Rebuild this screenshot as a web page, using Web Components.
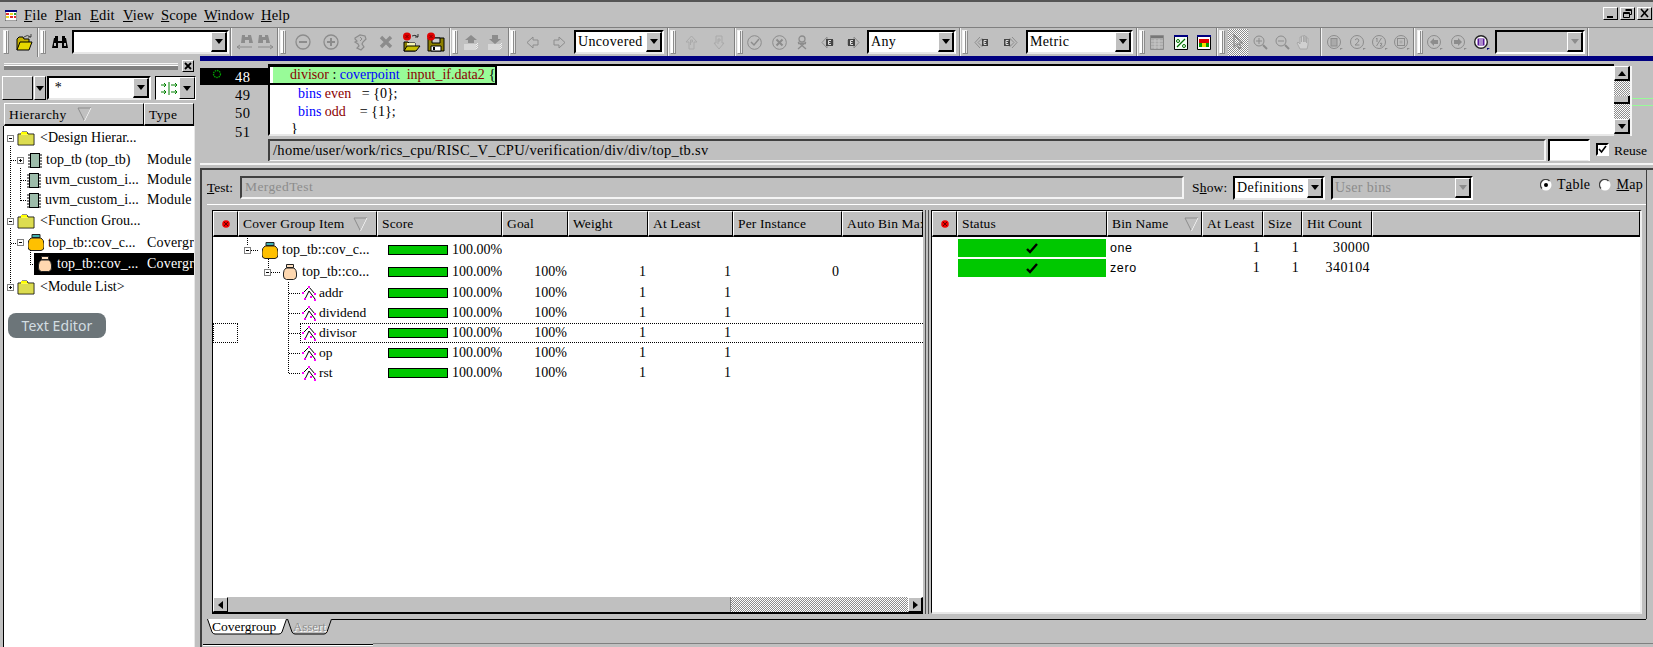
<!DOCTYPE html>
<html><head><meta charset="utf-8">
<style>
html,body{margin:0;padding:0;background:#c0c0c0}
body{width:1653px;height:647px;overflow:hidden;font:13.5px "Liberation Serif",serif;color:#000}
</style></head>
<body>
<q-app></q-app>
<script>
const G='#8c8c8c';
const ic={
open:[17,17,`<path d="M1 16V5l2-2h4l1 2h5v3" fill="#c8b400" stroke="#000"/><path d="M1 16h12l3-8H4z" fill="#e8d800" stroke="#000"/><path d="M8 3q3-3 7 0M15 3V0M15 3h-3" fill="none" stroke="#444"/>`],
binoc:[16,15,`<path d="M2 3h4v3h4V3h4l2 10h-6V8H6v5H0z" fill="#000"/><path d="M3 1h3v3H3zM10 1h3v3h-3z" fill="#000"/><path d="M2 8h2v3H2zM12 8h2v3h-2z" fill="#bbb"/>`],
binocL:[18,16,`<path d="M6 1h3v2h3V1h3l2 8h-4V6H9v3H5z" fill="${G}"/><path d="M1 13h15M1 13l3-2M1 13l3 2" fill="none" stroke="${G}"/>`],
binocR:[17,16,`<path d="M2 1h3v2h3V1h3l2 8H9V6H6v3H1z" fill="${G}"/><path d="M1 13h15M16 13l-3-2M16 13l-3 2" fill="none" stroke="${G}"/>`],
minus:[16,16,`<circle cx="8" cy="8" r="7" fill="none" stroke="${G}" stroke-width="1.300"/><path d="M4 8h8" stroke="${G}" stroke-width="2"/>`],
plus:[16,16,`<circle cx="8" cy="8" r="7" fill="none" stroke="${G}" stroke-width="1.300"/><path d="M4 8h8M8 4v8" stroke="${G}" stroke-width="2"/>`],
hand2:[16,17,`<path d="M3 4l5-3 5 1 1 3-3 3-1 2 2 3-3 3-4-2 2-2-1-2-3-2 2-1-2-2z" fill="#bdbdbd" stroke="${G}" stroke-width="1.200"/><path d="M8 3l2 2-2 2" fill="none" stroke="${G}"/>`],
xx:[14,14,`<path d="M2 2l10 10M12 2L2 12" stroke="${G}" stroke-width="3.400"/>`],
redfolder:[19,20,`<path d="M2 19V10h4l1 1h6v8z" fill="#8c8000" stroke="#000"/><path d="M5 11h8v4H5z" fill="#f4f4b0"/><path d="M2 19l3-5h13l-4 5z" fill="#c8c000" stroke="#000"/><circle cx="5" cy="4.500" r="4" fill="#e00000"/><path d="M3.500 3l3 3M6.500 3l-3 3" stroke="#800000"/><path d="M10 4q3-2 6 1M16 5V2M16 5h-3" fill="none" stroke="#333"/>`],
reddisk:[19,20,`<path d="M2 6h16v13H2z" fill="#8c8000" stroke="#000"/><path d="M6 6h8v5H6z" fill="#ccc" stroke="#000"/><path d="M5 14h10v5H5z" fill="#fff" stroke="#000"/><path d="M7 15h2v3H7z" fill="#000"/><circle cx="5" cy="4.500" r="4" fill="#e00000"/><path d="M3.500 3l3 3M6.500 3l-3 3" stroke="#800000"/>`],
stackup:[16,17,`<path d="M8 1l6 5h-3v3H5V6H2z" fill="${G}"/><path d="M1 11h12l2-2M1 13h12l2-2M1 15h12l2-2" fill="none" stroke="#f0f0f0"/>`],
stackdn:[16,17,`<path d="M8 10l6-5h-3V1H5v4H2z" fill="${G}"/><path d="M1 11h12l2-2M1 13h12l2-2M1 15h12l2-2" fill="none" stroke="#f0f0f0"/>`],
arrL:[13,13,`<path d="M1 6.500L7 1v3h5v5H7v3z" fill="none" stroke="${G}"/>`],
arrR:[13,13,`<path d="M12 6.500L6 1v3H1v5h5v3z" fill="none" stroke="${G}"/>`],
Pup:[13,15,`<path d="M6.500 1L12 7H9v7H4V7H1z" fill="none" stroke="#aaa"/><path d="M5.500 5v5M5.500 5h2v2h-2" fill="none" stroke="#aaa"/>`],
Pdn:[14,15,`<path d="M7 14l5-6H10V1H4v7H2z" fill="none" stroke="#aaa"/><path d="M6 4v5M6 4h2v2H6" fill="none" stroke="#aaa"/>`],
chk:[15,15,`<circle cx="7.500" cy="7.500" r="6.800" fill="none" stroke="${G}"/><path d="M4 7l3 3 5-6" fill="none" stroke="${G}" stroke-width="1.500"/>`],
xc:[15,15,`<circle cx="7.500" cy="7.500" r="6.800" fill="none" stroke="${G}"/><path d="M4.500 4.500l6 6M10.500 4.500l-6 6" stroke="${G}" stroke-width="2"/>`],
person:[12,15,`<circle cx="6" cy="4" r="3" fill="none" stroke="${G}" stroke-width="1.300"/><path d="M2 14L10 7M10 14L2 7M2 8.500h8" stroke="${G}" stroke-width="1.300"/>`],
Eleft:[13,13,`<path d="M1 6.500L6 1v3h6v5H6v3z" fill="none" stroke="${G}"/><rect x="5" y="3" width="7" height="7" fill="#444"/><path d="M10 4.500H7.500v4H10M7.500 6.500h2" fill="none" stroke="#ddd"/>`],
Eright:[13,13,`<path d="M12 6.500L7 1v3H1v5h6v3z" fill="none" stroke="${G}"/><rect x="1" y="3" width="7" height="7" fill="#444"/><path d="M6 4.500H3.500v4H6M3.500 6.500h2" fill="none" stroke="#ddd"/>`],
dEl:[15,13,`<path d="M1 6.500L6 1M1 6.500L6 12M4 6.500L8 2.500v2h5v4H8v2z" fill="none" stroke="${G}"/><rect x="8" y="3" width="6" height="7" fill="#444"/><path d="M12.500 4.500H10v4h2.500M10 6.500h2" fill="none" stroke="#ddd"/>`],
dEr:[15,13,`<path d="M14 6.500L9 1M14 6.500L9 12M11 6.500L7 2.500v2H2v4h5v2z" fill="none" stroke="${G}"/><rect x="1" y="3" width="6" height="7" fill="#444"/><path d="M5.500 4.500H3v4h2.500M3 6.500h2" fill="none" stroke="#ddd"/>`],
tbl:[14,15,`<path d="M.5.5h13v14H.5z" fill="#aaa" stroke="${G}"/><path d="M1 2h12" stroke="#777" stroke-width="2"/><path d="M1 6h12M1 9h12M1 12h12M5 4v10M9 4v10" stroke="#c8c8c8"/>`],
pct:[14,15,`<path d="M.5.5h13v14H.5z" fill="#f4fff4" stroke="#000"/><path d="M0 1h14" stroke="#000080" stroke-width="2"/><path d="M3 12l8-8" stroke="#007000" stroke-width="1.300"/><circle cx="4" cy="6" r="1.500" fill="none" stroke="#007000"/><circle cx="10" cy="11" r="1.500" fill="none" stroke="#007000"/>`],
clr:[14,15,`<path d="M.5.5h13v14H.5z" fill="#fff" stroke="#000"/><path d="M0 1h14" stroke="#000080" stroke-width="2"/><path d="M2 4h10v8H2z" fill="#00a000"/><path d="M2 4h10v4H2z" fill="#e00000"/><path d="M5 8h4v4H5z" fill="#f0e000"/>`],
ptr:[10,17,`<path d="M1 1v12l3-3 2 5 2-1-2-5h4z" fill="none" stroke="${G}" stroke-width="1.200"/>`],
zp:[15,15,`<circle cx="6" cy="6" r="5" fill="none" stroke="${G}"/><path d="M3 6h6M6 3v6" stroke="${G}"/><path d="M10 10l4 4" stroke="${G}" stroke-width="2"/>`],
zm:[15,15,`<circle cx="6" cy="6" r="5" fill="none" stroke="${G}"/><path d="M3 6h6" stroke="${G}"/><path d="M10 10l4 4" stroke="${G}" stroke-width="2"/>`],
hnd:[16,17,`<path d="M4 15L1 9l1-1 2 2V3h1.500v5-6H7.500v6-6.500H9V8V2.500h1.500V9 4H12v7l-1 4z" fill="#d0d0d0" stroke="#a8a8a8"/>`],
z1:[16,15,`<circle cx="7" cy="7" r="6.500" fill="none" stroke="${G}"/><rect x="4" y="3.500" width="6" height="7.500" fill="#aaa" stroke="${G}"/><path d="M13 13h3l-3 2z" fill="${G}"/>`],
z2:[16,15,`<circle cx="7" cy="7" r="6.500" fill="none" stroke="${G}"/><path d="M5 5q2-3 4 0q0 2-4 5h4.500" fill="none" stroke="${G}"/><path d="M13 13h3l-3 2z" fill="${G}"/>`],
zh:[16,15,`<circle cx="7" cy="7" r="6.500" fill="none" stroke="${G}"/><path d="M4 4l1-1v4M9.500 3L4.500 11M8 8.500q2-1 2 .5l-2 2h2.500" fill="none" stroke="${G}"/><path d="M13 13h3l-3 2z" fill="${G}"/>`],
zr:[16,15,`<circle cx="7" cy="7" r="6.500" fill="none" stroke="${G}"/><rect x="3.500" y="3.500" width="7" height="7" fill="none" stroke="${G}"/><rect x="5.500" y="5.500" width="3" height="3" fill="#aaa"/><path d="M13 13h3l-3 2z" fill="${G}"/>`],
bk:[16,15,`<circle cx="7" cy="7" r="6.500" fill="none" stroke="${G}"/><path d="M3 7l4-4v2h4v4H7v2z" fill="${G}"/><path d="M13 13h3l-3 2z" fill="${G}"/>`],
fw:[16,15,`<circle cx="7" cy="7" r="6.500" fill="none" stroke="${G}"/><path d="M11 7L7 3v2H3v4h4v2z" fill="${G}"/><path d="M13 13h3l-3 2z" fill="${G}"/>`],
lst:[16,15,`<circle cx="7" cy="7" r="6.300" fill="#fff" stroke="#222" stroke-width="1.400"/><path d="M3.500 3.500h7v7h-7z" fill="#5a1a9a"/><path d="M5 5h4M5 7h4M5 9h4" stroke="#fff"/><path d="M13 13h3l-3 2z" fill="#000080"/>`],
folder:[18,15,`<path d="M1 3h3l1-2h5l1 2h6v11H1z" fill="#ffff40" stroke="#222"/><path d="M2 4h14v9H2z" fill="#dcdc50"/><path d="M4 1h6v2H4z" fill="#ff0"/>`],
chip:[14,15,`<path d="M0 2h3M0 5h3M0 8h3M0 11h3M0 14h3M11 2h3M11 5h3M11 8h3M11 11h3M11 14h3" stroke="#000"/><rect x="2.500" y=".5" width="9" height="14" fill="#9dbcaa" stroke="#000"/>`],
jar:[16,17,`<path d="M4 .5h8v3H4z" fill="#40b0b0" stroke="#222"/><path d="M3 4h10q3 2 3 6v3q0 3-3 3.500H3q-3-.5-3-3.500v-3q0-4 3-6z" fill="#ffc000" stroke="#222"/>`],
jar2:[14,16,`<path d="M3.500.5h7v3h-7z" fill="#ffe0c0" stroke="#222"/><path d="M3 4h8q2.500 2 2.500 5v3q0 3-3 3.500h-7q-3-.5-3-3.500V9q0-3 2.500-5z" fill="#ffd8b0" stroke="#222"/>`],
cp:[15,15,`<path d="M7 1L1 7M7 1L13 8M7 5L3 13M7 5L13 13" fill="none" stroke="#000"/><path d="M6 0h2v2H6zM0 6h2v2H0zM12 7h2v2h-2zM2 12h2v2H2zM12 13h2v2h-2zM8 10h2v2H8z" fill="#f0f"/>`],
sort:[15,15,`<path d="M1 1h13L7.500 14z" fill="none" stroke="#8c8c8c"/><path d="M7.500 14L14 1" stroke="#fff"/>`],
dot:[10,10,`<circle cx="5" cy="5" r="3.800" fill="#f00000"/><path d="M3 3l4 4M7 3L3 7" stroke="#600000"/>`],
tick:[13,11,`<path d="M1 6l3 3L11 1" fill="none" stroke="#000" stroke-width="2.400"/>`],
filter:[16,13,`<path d="M0 3h5M3 1l2 2-2 2M0 10h5M3 8l2 2-2 2M8 0v13M10 3h6M14 1l2 2-2 2M10 10h6M14 8l2 2-2 2" fill="none" stroke="#008000"/>`],
app:[12,11,`<rect width="12" height="11" fill="#fff" stroke="#444"/><path d="M0 1h12" stroke="#000080" stroke-width="2"/><path d="M1 3h3v2H1z" fill="#e03030"/><path d="M5 3h3v2H5z" fill="#e8d820"/><path d="M9 3h2v2H9z" fill="#30a030"/><path d="M1 6h3v2H1z" fill="#e8d820"/><path d="M5 6h3v2H5z" fill="#e03030"/><path d="M9 6h2v2H9z" fill="#e03030"/>`]
};
const svg=(n)=>{const i=ic[n];return `<svg width="${i[0]}" height="${i[1]}" viewBox="0 0 ${i[0]} ${i[1]}" style="display:block;flex:none">${i[2]}</svg>`};
const esc=s=>String(s).replace(/&/g,'&amp;').replace(/</g,'&lt;').replace(/>/g,'&gt;');
const D=(n,css,html)=>customElements.define(n,class extends HTMLElement{connectedCallback(){if(this.shadowRoot)return;const r=this.attachShadow({mode:'open'});r.innerHTML=`<style>${css}</style>`+(typeof html==='function'?html(this):html)}});
const DITH='repeating-conic-gradient(#8c8c8c 0 25%,#fff 0 50%) 0 0/2px 2px';

D('q-icon',':host{display:block;flex:none}',h=>svg(h.getAttribute('n')));
D('q-grip',':host{display:block;flex:none;width:6px;height:24px;box-sizing:border-box;border:1px solid #8c8c8c;border-left-color:#f0f0f0;border-top-color:#f0f0f0;background:linear-gradient(90deg,#fff 0 2px,#8c8c8c 2px 3px,#e8e8e8 3px)}','');
D('q-sep',':host{display:block;flex:none;width:2px;height:29px;background:linear-gradient(90deg,#808080 0 1px,#f4f4f4 1px)}','');
D('q-arrow',`:host{display:flex;flex:none;align-items:center;justify-content:center;box-sizing:border-box;background:#c0c0c0;border:1px solid;border-color:#fff #000 #000 #fff}
 i{display:block;width:0;height:0;border-style:solid;border-color:transparent}
 :host([d=down]) i{border-width:5px 4.500px 0;border-top-color:var(--a,#000)}
 :host([d=up]) i{border-width:0 4.500px 5px;border-bottom-color:var(--a,#000)}
 :host([d=left]) i{border-width:4.500px 5px 4.500px 0;border-right-color:var(--a,#000)}
 :host([d=right]) i{border-width:4.500px 0 4.500px 5px;border-left-color:var(--a,#000)}`,'<i></i>');
D('q-combo',`:host{display:flex;flex:none;box-sizing:border-box;height:24px;background:#fff;border:2px solid;border-color:#000 #fff #e8e8e8 #000;font-size:14px;align-items:stretch}
 :host([off]){background:#c0c0c0;color:#8c8c8c;border-color:#000 #fff #fff #000}
 .t{flex:1;overflow:hidden;white-space:nowrap;padding-left:2px;line-height:19px;letter-spacing:.35px}
 q-arrow{width:16px;height:20px;border-right:2px solid #000;border-bottom:2px solid #000}
 :host([off]) q-arrow{--a:#8c8c8c}`,'<span class="t"><slot></slot></span><q-arrow d="down"></q-arrow>');
D('q-menubar',`:host{display:flex;align-items:center;height:25px;box-sizing:border-box;padding:2px 0 0 5px;font-size:14.5px;letter-spacing:.15px}
 span{display:block;white-space:nowrap}
 .b{margin-left:auto;display:flex;gap:2px;margin-right:1px;margin-top:-5px}
 .w{width:15px;height:13px;box-sizing:border-box;border:1px solid;border-color:#fff #000 #000 #fff;background:#c0c0c0;display:flex;align-items:center;justify-content:center}`,
 ()=>{const m=[['F','ile',31],['P','lan',35],['E','dit',33],['V','iew',38],['S','cope',43],['W','indow',57],['H','elp',35]];
  return svg('app')+'<span style="width:7px"></span>'+m.map(a=>`<span style="width:${a[2]}px"><u>${a[0]}</u>${a[1]}</span>`).join('')+
  `<div class="b"><div class="w"><svg width="13" height="11"><path d="M3 9h6" stroke="#000" stroke-width="2"/></svg></div><div class="w"><svg width="13" height="11"><path d="M4.500 1.500h6v5h-2M2.500 4.500h6v5h-6zM2.500 5.500h6M4.500 2.500h6" fill="none" stroke="#000"/></svg></div><div class="w"><svg width="13" height="11"><path d="M3 1l7 8M10 1L3 9" stroke="#000" stroke-width="1.600"/></svg></div></div>`});
D('q-toolbar',`:host{display:flex;align-items:center;height:29px;box-sizing:border-box;border-top:1px solid #808080}
 .sel{background:${DITH};background-size:2px 2px;width:20px;height:27px;display:flex;align-items:center;justify-content:center;flex:none}
 q-combo{height:24px}`,()=>{
 const L=[['g',3],['i','open',16],['s',37],['g',40],['i','binoc',52],['c',72,229,''],['s',230],['i','binocL',236],['i','binocR',257],['s',277],['g',280],['i','minus',295],['i','plus',323],['i','hand2',352],['i','xx',379],['i','redfolder',402],['i','reddisk',426],['s',449],['g',452],['i','stackup',463],['i','stackdn',487],['s',508],['g',510],['i','arrL',526],['i','arrR',553],['c',574,664,'Uncovered'],['s',667],['g',670],['i','Pup',685],['i','Pdn',712],['s',734],['g',737],['i','chk',747],['i','xc',772],['i','person',796],['i','Eleft',821],['i','Eright',847],['c',867,956,'Any'],['s',959],['g',962],['i','dEl',974],['i','dEr',1003],['c',1026,1133,'Metric'],['s',1136],['g',1139],['i','tbl',1150],['i','pct',1174],['i','clr',1197],['s',1216],['g',1219],['p',1228],['i','zp',1253],['i','zm',1275],['i','hnd',1296],['s',1320],['i','z1',1327],['i','z2',1350],['i','zh',1372],['i','zr',1394],['s',1413],['g',1417],['i','bk',1427],['i','fw',1451],['i','lst',1474],['c',1495,1585,'','off'],['s',1587]];
 let x=0,o='';
 for(const e of L){
  let at,w,html;
  if(e[0]==='g'){at=e[1];w=6;html=t=>`<q-grip style="${t}"></q-grip>`}
  else if(e[0]==='s'){at=e[1];w=2;html=t=>`<q-sep style="${t}"></q-sep>`}
  else if(e[0]==='i'){at=e[2];w=ic[e[1]][0];html=t=>`<q-icon n="${e[1]}" style="${t}"></q-icon>`}
  else if(e[0]==='p'){at=e[1];w=20;html=t=>`<div class="sel" style="${t}">${svg('ptr')}</div>`}
  else {at=e[1];w=e[2]-e[1];html=t=>`<q-combo ${e[4]||''} style="width:${w}px;${t}">${e[3]}</q-combo>`}
  o+=html(`margin-left:${at-x}px`);x=at+w;
 }
 return o});
D('q-head',`:host{display:flex;align-items:center;box-sizing:border-box;height:26px;border-top:1px solid #fff;border-left:1px solid #fff;border-right:1px solid #000;border-bottom:2px solid #000;padding:1px 0 0 4px;background:#c0c0c0;font-size:13.5px;letter-spacing:.15px;white-space:nowrap;overflow:hidden;position:relative;flex:none}
 :host([c]){padding:0;justify-content:center}`,
 h=>`<slot></slot>`+(h.getAttribute('sort')?`<span style="margin-left:${h.getAttribute('sort')}px">${svg('sort')}</span>`:''));
D('q-hierarchy',`:host{display:flex;flex-direction:column;width:200px;flex:none;height:591px;position:relative;overflow:hidden}
 .top{display:flex;height:20px;align-items:center;padding:0 6px 0 4px;box-sizing:border-box}
 .rule{flex:1;height:5px;border-top:1px solid #f4f4f4;border-bottom:1px solid #808080;background:linear-gradient(#c0c0c0 0 1px,#fff 1px 2px,#808080 2px 3px)}
 .cl{width:12px;height:12px;box-sizing:border-box;margin-left:4px;border:1px solid;border-color:#fff #000 #000 #fff;display:flex;align-items:center;justify-content:center}
 .filter{display:flex;height:24px;margin-bottom:3px}
 .b1{width:31px;margin-left:2px;box-sizing:border-box;border:1px solid;border-color:#fff #000 #000 #fff}
 q-arrow.b2{width:12px;margin-left:1px}
 q-combo{margin-left:1px;width:104px;height:24px}
 .t{flex:1;padding-left:3px}
 .f2{width:41px;margin-left:4px;display:flex;box-sizing:border-box;background:#fff;border:1px solid;border-color:#000 #fff #fff #000;align-items:center;padding-left:5px}
 .hd{display:flex;margin-left:4px;width:190px;flex:none}
 q-tree{flex:1}`,
 `<div class="top"><div class="rule"></div><div class="cl"><svg width="10" height="10"><path d="M2 2l6 6M8 2L2 8" stroke="#000" stroke-width="1.800"/></svg></div></div>
 <div class="filter"><div class="b1"></div><q-arrow class="b2" d="down"></q-arrow><q-combo>&nbsp;*</q-combo><div class="f2">${svg('filter')}<q-arrow d="down" style="width:16px;height:22px;margin-left:auto"></q-arrow></div></div>
 <div class="hd"><q-head style="width:140px;height:23px;letter-spacing:.4px" sort="10">Hierarchy</q-head><q-head style="width:50px;height:23px;letter-spacing:.4px">Type</q-head></div>
 <q-tree></q-tree>`);
D('q-trow',`:host{display:flex;align-items:center;box-sizing:border-box;white-space:nowrap;font-size:14px;letter-spacing:0;position:relative}
 .n{display:flex;align-items:center;width:143px;box-sizing:border-box;flex:none;overflow:hidden;height:100%}
 .box{width:7px;height:7px;box-sizing:border-box;border:1px solid #808080;background:#fff;flex:none;position:relative}
 .box i{position:absolute;left:1px;top:2px;width:3px;height:1px;background:#000}
 .box b{position:absolute;left:2px;top:1px;width:1px;height:3px;background:#000}
 .ty{flex:none;letter-spacing:.2px}
 .s{background:#000;color:#fff;display:flex;align-items:center;height:100%;flex:1;min-width:0;margin-left:30px;padding-left:4px}`,
 h=>{const g=a=>h.getAttribute(a)||'';const box=g('box');const bx=box?`<span class="box" style="margin-left:${g('bx')}px"><i></i>${box==='p'?'<b></b>':''}</span>`:'';const t=esc(g('t'));
  if(h.hasAttribute('sel'))return `<div class="s"><div style="display:flex;align-items:center;width:109px;flex:none;overflow:hidden">${svg(g('ic'))}<span style="margin-left:5px">${t}</span></div><span class="ty" style="overflow:hidden">${g('ty')}</span></div>`;
  return `<div class="n" style="padding-left:${box?0:g('pl')}px">${bx}<span style="margin-left:${g('gi')}px">${svg(g('ic'))}</span><span style="margin-left:${g('gt')}px">${t}</span></div><span class="ty">${g('ty')}</span>`});
D('q-tree',`:host{display:block;margin-left:3px;width:192px;box-sizing:border-box;background:#fff;border-left:1px solid #000;border-right:1px solid #e8e8e8;position:relative;overflow:hidden}
 svg.c{position:absolute;left:-4px;top:-126px;pointer-events:none}
 .p{display:flex;align-items:center;justify-content:center;margin:14px 0 0 4px;width:98px;height:25px;border-radius:8px;background:#6c7579;color:#d3dde2;font:14px "Noto Sans",sans-serif;letter-spacing:.1px}`,
 `<q-trow style="height:24px" box="m" bx="3" gi="3" gt="5" ic="folder" t="&lt;Design Hierar..."></q-trow>
 <q-trow style="height:20px" box="p" bx="13" gi="4" gt="4" ic="chip" t="top_tb (top_tb)" ty="Module"></q-trow>
 <q-trow style="height:20px" pl="23" gi="0" gt="4" ic="chip" t="uvm_custom_i..." ty="Module"></q-trow>
 <q-trow style="height:20px" pl="23" gi="0" gt="4" ic="chip" t="uvm_custom_i..." ty="Module"></q-trow>
 <q-trow style="height:22px" box="m" bx="3" gi="3" gt="5" ic="folder" t="&lt;Function Grou..."></q-trow>
 <q-trow style="height:21px" box="m" bx="13" gi="4" gt="4" ic="jar" t="top_tb::cov_c..." ty="Covergro"></q-trow>
 <q-trow style="height:22px" sel ic="jar2" t="top_tb::cov_..." ty="Covergro"></q-trow>
 <q-trow style="height:24px" box="p" bx="3" gi="3" gt="5" ic="folder" t="&lt;Module List&gt;"></q-trow>
 <div class="p">Text Editor</div>
 <svg class="c" width="200" height="420"><path d="M10.500 146V217M10.500 228V283M10.500 160.500H17M20.500 168V200.500M20.500 180.500H27M20.500 200.500H27M10.500 243.500H17M30.500 250V264.500H34" fill="none" stroke="#000" stroke-dasharray="1 1" shape-rendering="crispEdges"/></svg>`);
D('q-sb',`:host{display:flex;flex-direction:column;width:16px;flex:none;height:68px;margin-top:2px}
 .d{background:${DITH};background-size:2px 2px;flex:none}
 q-arrow{height:15px;border-right:2px solid #000;border-bottom:2px solid #000;flex:none}
 .th{height:8px;background:#c0c0c0;border-bottom:2px solid #000;border-right:2px solid #000;box-sizing:border-box;flex:none}`,
 `<q-arrow d="up"></q-arrow><div class="d" style="height:15px"></div><div class="th"></div><div class="d" style="height:15px"></div><q-arrow d="down"></q-arrow>`);
D('q-source',`:host{display:flex;height:97px;flex:none;overflow:hidden;position:relative}
 .gut{width:68px;flex:none;font-size:14.5px;letter-spacing:.5px}
 .gut div{height:18px;line-height:18px;padding-left:35px}
 .gut .cur{background:#000;color:#fff;height:17px;margin-top:4px;position:relative;margin-bottom:1px}
 .gut .cur svg{position:absolute;left:11px;top:0}
 .col{flex:1;display:flex;flex-direction:column}
 .top{display:flex;height:72px}
 .ed{flex:none;width:1346px;box-sizing:border-box;background:#fff;border-top:2px solid #000;border-left:2px solid #000;border-bottom:2px solid #e8e8e8;overflow:hidden;font-size:14px;letter-spacing:0;white-space:pre}
 .hl{box-sizing:border-box;height:19px;width:229px;margin-left:-2px;border:2px solid #000;border-top-width:1px;background:linear-gradient(90deg,#fff 0 3px,#98fb98 3px);line-height:16px;padding-left:20px}
 .ln{height:18px;line-height:18px;padding-left:28px}
 .r{color:#8b0000}.b{color:#0000ff}
 .br{width:2px;background:#f4f4f4;height:70px;margin-top:2px}
 .mk{flex:1;margin-top:33.500px;height:6px;border-top:1px solid #98fb98;border-bottom:1px solid #98fb98}
 .pr{display:flex;height:23px;margin-top:3px;align-items:stretch}
 .p{width:1278px;box-sizing:border-box;border:2px solid;border-color:#404040 #f4f4f4 #f4f4f4 #404040;line-height:19px;padding-left:3px;font-size:14.5px;letter-spacing:.32px;white-space:nowrap;overflow:hidden}
 .in{width:42px;margin-left:2px;background:#fff;box-sizing:border-box;border:2px solid;border-color:#000 #fff #e8e8e8 #000}
 .ck{width:13px;height:13px;box-sizing:border-box;margin:4px 0 0 6px;border:2px solid;border-color:#000 #fff #fff #000;background:#fff;display:flex;align-items:center;justify-content:center}
 .re{margin-left:5px;line-height:23px;letter-spacing:0;font-size:13.500px}`,
 `<div class="gut"><div class="cur"><svg width="12" height="12"><circle cx="6" cy="6" r="3.500" fill="none" stroke="#00a000" stroke-width="1.300" stroke-dasharray="1.500 .8"/></svg>48</div><div>49</div><div style="height:19px;line-height:19px">50</div><div>51</div></div>
 <div class="col"><div class="top"><div class="ed"><div class="hl"><span class="r">divisor</span> : <span class="b">coverpoint</span>  <span class="r">input_if.data2</span><span style="margin-left:4px">{</span></div><div class="ln"><span class="b">bins</span> <span class="r">even</span>   = {0};</div><div class="ln"><span class="b">bins</span> <span class="r">odd</span>    = {1};</div><div class="ln" style="padding-left:21px;height:15px;line-height:15px">}</div></div><q-sb></q-sb><div class="br"></div><div class="mk"></div></div>
 <div class="pr"><div class="p">/home/user/work/rics_cpu/RISC_V_CPU/verification/div/div/top_tb.sv</div><div class="in"></div><div class="ck"><svg width="9" height="9"><path d="M1 4l2.500 3L8 1" fill="none" stroke="#000" stroke-width="1.600"/></svg></div><div class="re">Reuse</div></div></div>`);
D('q-radio',`:host{display:flex;align-items:center;flex:none;font-size:14px;letter-spacing:.3px}
 svg{margin-right:5px;flex:none}`,h=>`<svg width="12" height="12"><circle cx="6" cy="6" r="5.500" fill="#fff"/><path d="M2 9.500A5.200 5.200 0 0 1 9.500 2" fill="none" stroke="#404040" stroke-width="1.300"/>${h.hasAttribute('on')?'<circle cx="6" cy="6" r="2" fill="#000"/>':''}</svg><slot></slot>`);
D('q-filterbar',`:host{display:flex;align-items:center;height:35px;margin-left:5px;box-sizing:border-box;border-bottom:1px solid #fff;font-size:13.500px;letter-spacing:.2px;padding-top:1px;flex:none}
 .l{flex:none}
 .tb{width:944px;height:23px;box-sizing:border-box;flex:none;border:2px solid;border-color:#404040 #f4f4f4 #f4f4f4 #404040;color:#8c8c8c;padding-left:3px;line-height:18px;letter-spacing:.4px;margin-left:8px}`,
 `<span class="l" style="width:25px;letter-spacing:0"><u>T</u>est:</span><div class="tb">MergedTest</div><span class="l" style="margin-left:8px;width:41px"><span>S<u>h</u>ow:</span></span>
 <q-combo style="width:92px">Definitions</q-combo><q-combo off style="width:142px;margin-left:6px">User bins</q-combo>
 <q-radio on style="margin:-6px 0 0 67px">T<u>a</u>ble</q-radio><q-radio style="margin:-6px 0 0 9px"><u>M</u>ap</q-radio>`);
D('q-hbar',`:host{display:flex;height:17px;flex:none;background:#c0c0c0;box-sizing:border-box;border-bottom:2px solid #000}
 q-arrow{width:15px;flex:none;border-right:1px solid #000}
 .t{width:503px;box-sizing:border-box;flex:none;border-right:1px solid #808080;background:#c0c0c0}
 .d{flex:1;background:${DITH};background-size:2px 2px;height:15px}`,`<q-arrow d="left"></q-arrow><div class="t"></div><div class="d"></div><q-arrow d="right" style="width:15px;border-right:2px solid #000"></q-arrow>`);
const CG='25px 139px 125px 66px 80px 85px 109px 81px';
D('q-bar',`:host{display:flex;align-items:center;white-space:nowrap;overflow:hidden;letter-spacing:0;font-size:14px;padding-left:11px;min-width:0}
 i{display:block;width:60px;height:10px;box-sizing:border-box;background:#00c800;border:1px solid #000;flex:none;margin-right:4px}`,'<i></i><slot></slot>');
D('q-cgrow',`:host{display:grid;grid-template-columns:${CG};align-items:center;position:relative;font-size:14px;letter-spacing:0;white-space:nowrap}
 .n{display:flex;align-items:center;grid-column:2;height:100%;overflow:hidden;box-sizing:border-box}
 .box{width:7px;height:7px;box-sizing:border-box;border:1px solid #808080;background:#fff;flex:none;position:relative}
 .box i{position:absolute;left:1px;top:2px;width:3px;height:1px;background:#000}
 .r{text-align:right}
 .sel{position:absolute;left:87px;right:0;top:0;bottom:0;border:1px dotted #000;border-right:0;box-sizing:border-box;pointer-events:none}
 .sc{position:absolute;left:0;width:25px;top:0;bottom:0;border:1px dotted #000;box-sizing:border-box}`,
 h=>{const g=a=>h.getAttribute(a)||'';
  return `<div></div><div class="n" style="padding-left:${g('p')}px">${g('b')?`<span class="box"><i></i></span>`:''}<span style="margin-left:${g('gi')}px">${svg(g('ic'))}</span><span style="margin-left:${g('gt')}px;font-size:${g('b')?14:13.5}px">${g('t')}</span></div><q-bar>100.00%</q-bar>${g('goal')?`<div class="r" style="padding-right:1px">${g('goal')}</div><div class="r" style="padding-right:2px">1</div><div class="r" style="padding-right:2px">1</div>`:'<div></div><div></div><div></div>'}<div class="r" style="padding-right:3px">${g('per')}</div><div></div>${h.hasAttribute('sel')?'<div class="sel"></div><div class="sc"></div>':''}`});
D('q-covertable',`:host{display:flex;flex-direction:column;width:711px;flex:none;box-sizing:border-box;border-top:1px solid #000;border-left:1px solid #000;height:404px;background:#fff;position:relative;overflow:hidden}
 .h{display:flex;flex:none}
 .b{flex:1;padding-top:2px;position:relative}
 svg.c{position:absolute;left:-213px;top:-236px}`,
 `<div class="h"><q-head style="width:25px" c>${svg('dot')}</q-head><q-head style="width:139px" sort="9">Cover Group Item</q-head><q-head style="width:125px">Score</q-head><q-head style="width:66px">Goal</q-head><q-head style="width:80px">Weight</q-head><q-head style="width:85px">At Least</q-head><q-head style="width:109px">Per Instance</q-head><q-head style="width:81px">Auto Bin Max</q-head></div>
 <div class="b"><q-cgrow style="height:22px" p="6" b="1" gi="11" gt="4" ic="jar" t="top_tb::cov_c..."></q-cgrow>
 <q-cgrow style="height:22px" p="26" b="1" gi="12" gt="5" ic="jar2" t="top_tb::co..." goal="100%" per="0"></q-cgrow>
 <q-cgrow style="height:20px" p="64" gi="0" gt="2" ic="cp" t="addr" goal="100%"></q-cgrow>
 <q-cgrow style="height:20px" p="64" gi="0" gt="2" ic="cp" t="dividend" goal="100%"></q-cgrow>
 <q-cgrow sel style="height:20px" p="64" gi="0" gt="2" ic="cp" t="divisor" goal="100%"></q-cgrow>
 <q-cgrow style="height:20px" p="64" gi="0" gt="2" ic="cp" t="op" goal="100%"></q-cgrow>
 <q-cgrow style="height:20px" p="64" gi="0" gt="2" ic="cp" t="rst" goal="100%"></q-cgrow>
 <svg class="c" width="720" height="400"><path d="M247.500 237V245M251 249.500H259M268.500 258V267M271 271.500H281M288.500 281V372.500M288.500 292.500H300M288.500 312.500H300M288.500 332.500H300M288.500 352.500H300M288.500 372.500H300" fill="none" stroke="#000" stroke-dasharray="1 1" shape-rendering="crispEdges"/></svg></div>
 <q-hbar></q-hbar>`);
const BG='25px 150px 95px 61px 39px 70px';
D('q-binrow',`:host{display:grid;grid-template-columns:${BG};height:20px;align-items:center;font-size:14px;letter-spacing:.2px}
 .s{background:#00c800;height:18px;margin:0 1px;display:flex;align-items:center;justify-content:center}
 .r{text-align:right}
 .nm{padding-left:3px;font:12.500px "Liberation Sans",sans-serif;letter-spacing:.6px}`,
 h=>`<div></div><div class="s">${svg('tick')}</div><div class="nm">${h.getAttribute('t')}</div><div class="r" style="padding-right:3px">1</div><div class="r" style="padding-right:3px">1</div><div class="r" style="padding-right:2px;letter-spacing:.4px">${h.getAttribute('c')}</div>`);
D('q-bintable',`:host{display:flex;flex-direction:column;width:711px;flex:none;box-sizing:border-box;border-top:1px solid #000;border-left:1px solid #000;border-right:2px solid #f0f0f0;border-bottom:2px solid #e8e8e8;height:404px;background:#fff}
 .h{display:flex;flex:none}.rows{padding-top:1px}`,
 `<div class="h"><q-head style="width:25px" c>${svg('dot')}</q-head><q-head style="width:150px">Status</q-head><q-head style="width:95px" sort="16">Bin Name</q-head><q-head style="width:61px">At Least</q-head><q-head style="width:39px">Size</q-head><q-head style="width:70px">Hit Count</q-head><q-head style="flex:1"></q-head></div>
 <div class="rows"><q-binrow t="one" c="30000"></q-binrow><q-binrow t="zero" c="340104"></q-binrow></div>`);
D('q-tab',`:host{display:block;position:relative;height:16px;flex:none;font-size:13.500px;letter-spacing:0;line-height:15px;white-space:nowrap}
 svg{position:absolute;left:0;top:0}
 span{position:relative;padding-left:5px}
 :host([off]) span{color:#8c8c8c;text-shadow:1px 1px 0 #fff;padding-left:6px;font-size:12.800px}`,
 h=>{const w=+h.getAttribute('w');return `<svg width="${w+2}" height="16"><path d="M.5 0L5 13Q6 15 8 15H${w-8}Q${w-6} 15 ${w-5} 13L${w-.5} 0" fill="${h.hasAttribute('off')?'#c0c0c0':'#fff'}" stroke="#000"/></svg><span><slot></slot></span>`});
D('q-panel',`:host{display:flex;flex-direction:column;flex:1;box-sizing:border-box;border-top:2px solid #404040;border-left:2px solid #404040;min-height:0}
 .up{width:1445px;box-sizing:border-box;border-right:1px solid #404040;flex:none}
 .t{display:flex;margin-left:10px;margin-top:5px;height:404px;padding-bottom:5px}
 .sp{width:8px;flex:none;height:404px;background:linear-gradient(90deg,#c0c0c0 0 2px,#505050 2px 3px,#c0c0c0 3px 5px,#505050 5px 6px,#c0c0c0 6px)}
 .tabs{display:flex;height:25px;padding-left:5px;box-sizing:border-box;flex:none}
 .rl{width:1314px;height:1px;background:#000;flex:none}
 .st{display:flex;height:2px;flex:none}
 .st i{display:block;width:170px;margin-left:1px;height:1px;background:#000;border-bottom:1px solid #fff}
 .st b{display:block;flex:1;height:1px;background:#808080;margin-top:-1px}`,
 `<div class="up"><q-filterbar></q-filterbar><div class="t"><q-covertable></q-covertable><div class="sp"></div><q-bintable></q-bintable></div></div>
 <div class="tabs"><q-tab w="80" style="width:80px">Covergroup</q-tab><q-tab off w="45" style="width:45px">Assert</q-tab><div class="rl"></div></div><div class="st"><i></i><b></b></div>`);
D('q-right',`:host{display:flex;flex-direction:column;flex:1;width:1453px}
 .blue{height:5px;background:#000080;flex:none;margin-bottom:3px}
 .sepw{height:2px;background:#f4f4f4;margin-top:2px;flex:none}
 .gap{height:3px;flex:none}`,
 `<div class="blue"></div><q-source></q-source><div class="sepw"></div><div class="gap"></div><q-panel></q-panel>`);
D('q-app',`:host{display:flex;flex-direction:column;width:1653px;height:647px;background:#c0c0c0;overflow:hidden}
 .t{height:2px;background:#555;flex:none}
 .m{display:flex;flex:1;min-height:0}`,
 `<div class="t"></div><q-menubar></q-menubar><q-toolbar></q-toolbar><div class="m"><q-hierarchy></q-hierarchy><q-right></q-right></div>`);
</script>
</body></html>
